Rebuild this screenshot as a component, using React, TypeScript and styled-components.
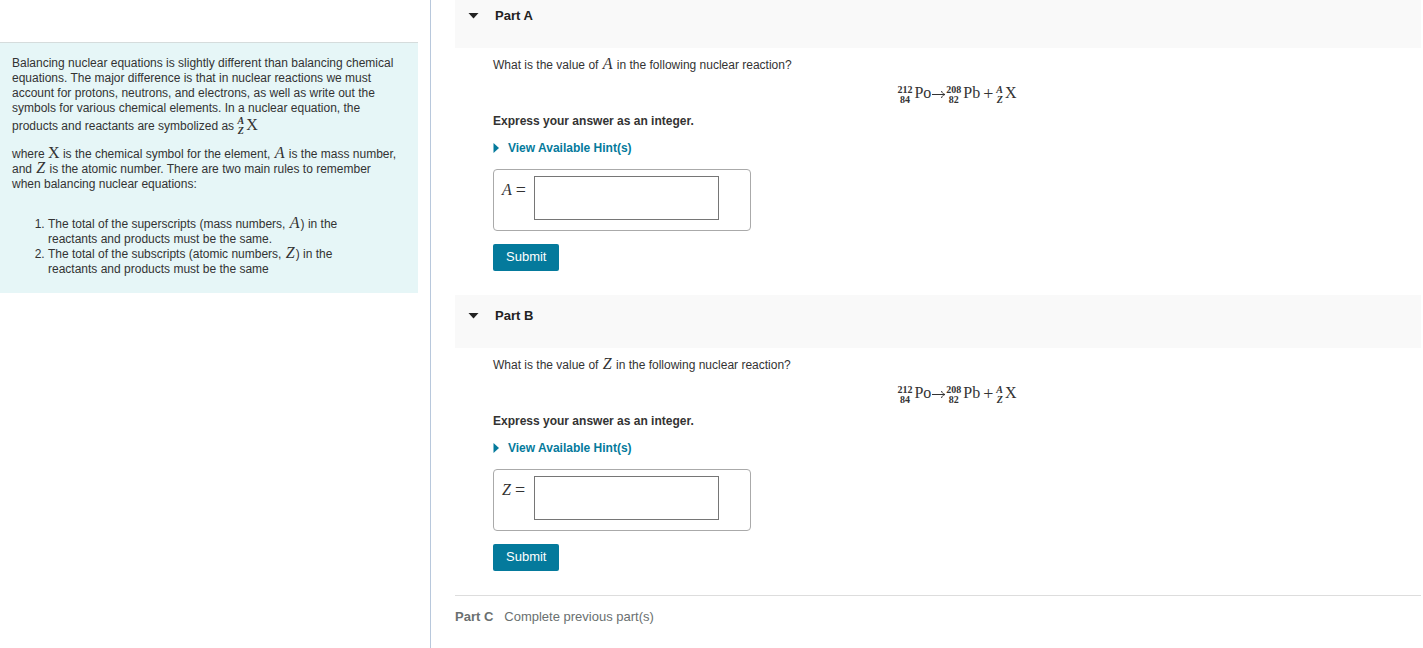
import React from "react";
import styled, { createGlobalStyle } from "styled-components";

const GlobalStyle = createGlobalStyle`
  *, *::before, *::after { box-sizing: border-box; }
  body {
    margin: 0;
    background: #fff;
    color: #333;
    font-family: "Liberation Sans", Arial, sans-serif;
    font-size: 12px;
    line-height: 15px;
  }
`;

const Page = styled.div`
  display: grid;
  grid-template-columns: minmax(0, 431px) minmax(0, 1fr);
  min-height: 100vh;
`;

const Sidebar = styled.aside`
  padding: 42px 12px 0 0;
  border-right: 1px solid #b8c8dc;
`;

const Intro = styled.section`
  padding: 13px 16px 16px 12px;
  border-top: 1px solid #d5dcdc;
  background: #e6f6f7;
`;

const Paragraph = styled.p`
  margin: 0 0 11px;
`;

const Rules = styled.ol`
  margin: 25px 40px 0 0;
  padding-left: 36px;
`;

const Symbol = styled.span<{ $italic?: boolean }>`
  margin: ${(p) => (p.$italic ? "0 1px" : "0")};
  font-family: "Liberation Serif", "Times New Roman", serif;
  font-size: 16px;
  line-height: 0;
  font-style: ${(p) => (p.$italic ? "italic" : "normal")};
`;

const NuclideBox = styled.span`
  font-family: "Liberation Serif", "Times New Roman", serif;
  font-size: 16px;
  white-space: nowrap;
`;

const Scripts = styled.span<{ $italic?: boolean }>`
  display: inline-flex;
  flex-direction: column;
  align-items: center;
  margin-right: 2px;
  vertical-align: middle;
  font-size: 10px;
  font-weight: bold;
  line-height: 10px;
  font-style: ${(p) => (p.$italic ? "italic" : "normal")};
`;

const Main = styled.main`
  padding: 0 2px 0 24px;
`;

const PartHeader = styled.header<{ $compact?: boolean }>`
  display: flex;
  align-items: center;
  gap: 16px;
  padding: ${(p) => (p.$compact ? "8px" : "13px")} 13px 24px;
  background: #f9f9f9;
`;

const Toggle = styled.button`
  display: flex;
  padding: 0;
  border: 0;
  background: none;
  color: #222;
`;

const PartTitle = styled.h2`
  margin: 0;
  color: #222;
  font-size: 13px;
  line-height: 16px;
`;

const PartBody = styled.div`
  padding: 9px 0 24px 38px;
`;

const Question = styled.p`
  margin: 0;
  line-height: 16px;
`;

const Equation = styled.div`
  display: flex;
  justify-content: center;
  align-items: center;
  height: 20px;
  margin: 11px 0 10px;
  font-family: "Liberation Serif", "Times New Roman", serif;
  font-size: 16px;
  line-height: 20px;
`;

const Operator = styled.span`
  margin: 0 3px;
  font-size: 18px;
`;

const Instruction = styled.p`
  margin: 0;
  font-weight: bold;
`;

const Hints = styled.a`
  display: flex;
  align-items: center;
  gap: 8px;
  width: fit-content;
  margin: 12px 0 13px;
  color: #047a9c;
  font-weight: bold;
  text-decoration: none;
`;

const AnswerBox = styled.div`
  display: flex;
  align-items: flex-start;
  gap: 7px;
  width: 258px;
  height: 62px;
  padding: 6px 7px;
  border: 1px solid #aaa;
  border-radius: 4px;
`;

const AnswerLabel = styled.label`
  display: flex;
  align-items: center;
  width: 26px;
  height: 28px;
  font-family: "Liberation Serif", "Times New Roman", serif;
  font-size: 16px;
`;

const AnswerInput = styled.input`
  width: 185px;
  height: 44px;
  padding: 4px 8px;
  border: 1px solid #767676;
  background: #fff;
  font: inherit;
`;

const Submit = styled.button`
  display: block;
  height: 27px;
  margin-top: 13px;
  padding: 0 13px 2px;
  border: 0;
  border-radius: 2px;
  background: #047a9c;
  color: #fff;
  font-family: inherit;
  font-size: 13px;
`;

const LockedPart = styled.section`
  display: flex;
  gap: 11px;
  padding: 13px 0;
  border-top: 1px solid #ddd;
  color: #6a7070;
  font-size: 13px;
  line-height: 16px;
`;

const LockedTitle = styled.h2`
  margin: 0;
  font-size: 13px;
`;

function Nuclide({ mass, atomic, symbol, italic }: {
  mass: string; atomic: string; symbol: string; italic?: boolean;
}) {
  return (
    <NuclideBox>
      <Scripts $italic={italic}>
        <span>{mass}</span>
        <span>{atomic}</span>
      </Scripts>
      {symbol}
    </NuclideBox>
  );
}

function Part({ name, variable, compact }: { name: string; variable: string; compact?: boolean }) {
  const inputId = `answer-${variable}`;
  return (
    <section>
      <PartHeader $compact={compact}>
        <Toggle type="button" aria-label={`Collapse ${name}`}>
          <svg width="11" height="6" viewBox="0 0 11 6" aria-hidden="true">
            <path d="M0.5 0H10.5L5.5 5.5Z" fill="currentColor" />
          </svg>
        </Toggle>
        <PartTitle>{name}</PartTitle>
      </PartHeader>
      <PartBody>
        <Question>
          What is the value of <Symbol $italic>{variable}</Symbol> in the following nuclear reaction?
        </Question>
        <Equation>
          <Nuclide mass="212" atomic="84" symbol="Po" />
          <svg width="15" height="10" viewBox="0 0 15 10" fill="none" stroke="currentColor" aria-hidden="true">
            <path d="M1 5.5H14M10.5 2C11 4 12.3 5 14 5.5C12.3 6 11 7 10.5 9" />
          </svg>
          <Nuclide mass="208" atomic="82" symbol="Pb" />
          <Operator>+</Operator>
          <Nuclide mass="A" atomic="Z" symbol="X" italic />
        </Equation>
        <Instruction>Express your answer as an integer.</Instruction>
        <Hints href="#">
          <svg width="7" height="12" viewBox="0 0 7 12" aria-hidden="true">
            <path d="M0.5 0L6 5L0.5 10Z" fill="currentColor" />
          </svg>
          View Available Hint(s)
        </Hints>
        <AnswerBox>
          <AnswerLabel htmlFor={inputId}>
            <Symbol $italic>{variable}</Symbol>
            <Operator>=</Operator>
          </AnswerLabel>
          <AnswerInput id={inputId} type="text" />
        </AnswerBox>
        <Submit type="button">Submit</Submit>
      </PartBody>
    </section>
  );
}

export default function App() {
  return (
    <>
      <GlobalStyle />
      <Page>
        <Sidebar>
          <Intro>
            <Paragraph>
              Balancing nuclear equations is slightly different than balancing chemical equations. The
              major difference is that in nuclear reactions we must account for protons, neutrons, and
              electrons, as well as write out the symbols for various chemical elements. In a nuclear
              equation, the products and reactants are symbolized as{" "}
              <Nuclide mass="A" atomic="Z" symbol="X" italic />
            </Paragraph>
            <Paragraph>
              where <Symbol>X</Symbol> is the chemical symbol for the element,{" "}
              <Symbol $italic>A</Symbol> is the mass number, and <Symbol $italic>Z</Symbol> is the
              atomic number. There are two main rules to remember when balancing nuclear equations:
            </Paragraph>
            <Rules>
              <li>
                The total of the superscripts (mass numbers, <Symbol $italic>A</Symbol>) in the
                reactants and products must be the same.
              </li>
              <li>
                The total of the subscripts (atomic numbers, <Symbol $italic>Z</Symbol>) in the
                reactants and products must be the same
              </li>
            </Rules>
          </Intro>
        </Sidebar>
        <Main>
          <Part name="Part A" variable="A" compact />
          <Part name="Part B" variable="Z" />
          <LockedPart>
            <LockedTitle>Part C</LockedTitle>
            <span>Complete previous part(s)</span>
          </LockedPart>
        </Main>
      </Page>
    </>
  );
}
